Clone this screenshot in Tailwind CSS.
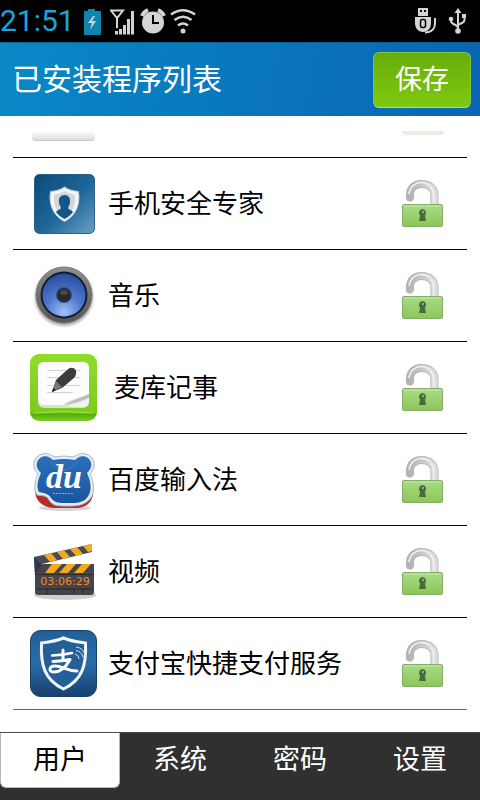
<!DOCTYPE html>
<html lang="zh-CN">

<head>
    <meta charset="UTF-8">
    <meta name="viewport" content="width=device-width, initial-scale=1.0">
    <title>已安装程序列表</title>
    <script src="https://cdn.jsdelivr.net/npm/@tailwindcss/browser@4"></script>
</head>

<body class="min-h-screen flex flex-col bg-white text-black font-['Roboto','Noto_Sans_CJK_SC',sans-serif]">
    <!-- Shared lock icon -->
    <svg width="0" height="0" class="absolute" aria-hidden="true">
        <defs>
            <linearGradient id="lockBody" x1="0" y1="0" x2="0" y2="1">
                <stop offset="0" stop-color="#a6dc86" />
                <stop offset="1" stop-color="#8cc657" />
            </linearGradient>
            <linearGradient id="lockBar" x1="0" y1="0" x2="1" y2="0">
                <stop offset="0" stop-color="#b4b4b4" />
                <stop offset="1" stop-color="#dedede" />
            </linearGradient>
        </defs>
        <symbol id="lock" viewBox="0 0 48 56">
            <path d="M11 21.500C10 12 16 8 22.500 8C31 8 35.500 13 35.500 20V30" fill="none" stroke="#b0b0b0" stroke-width="8" stroke-linecap="round" />
            <path d="M11 21.500C10 12 16 8 22.500 8C31 8 35.500 13 35.500 20V30" fill="none" stroke="url(#lockBar)" stroke-width="6.500" stroke-linecap="round" />
            <path d="M10 18C11 10 17 6 23 6.500C30 7 34 12 34.500 18V27" fill="none" stroke="#f2f2f2" stroke-width="1.500" />
            <rect x="3.500" y="28.500" width="40" height="22" rx="1.500" fill="url(#lockBody)" stroke="#86ad66" />
            <path d="M5 30H42" stroke="#c2ebab" />
            <path d="M23.500 33a3.800 3.800 0 0 1 2.300 6.600L27 45H20l1.200-5.400A3.800 3.800 0 0 1 23.500 33z" fill="#4b6a3c" />
            <circle cx="24" cy="36" r="1.200" fill="#93a986" />
        </symbol>
    </svg>

    <!-- Status bar -->
    <div class="h-[42px] bg-black flex items-center justify-between pr-3">
        <div class="flex items-center">
            <time class="w-[82px] text-[30px] leading-10 text-[#1ba4dc]">21:51</time>
            <svg class="w-5 h-7" viewBox="0 0 20 28">
                <path d="M6 2h7v2h6v24H2V4h4z" fill="#0f84ae" />
                <path d="M11 9l-5 7h4l-2 7 6-9h-4l3-5z" fill="#c9d4da" />
            </svg>
            <svg class="w-7 h-7 ml-2" viewBox="0 0 28 28" fill="none" stroke="#d4d4d4">
                <path d="M1 3.500H13L7.500 10.500H6.500zM7 9V21" stroke-width="2" />
                <path d="M6.500 24v3.500M10.500 22v5.500M14.500 18v9.500M18.500 12v15.500M22.500 4v23.500" stroke-width="3" />
            </svg>
            <svg class="w-7 h-7 ml-px" viewBox="0 0 28 28">
                <circle cx="14" cy="15.500" r="11" fill="#d4d4d4" />
                <path d="M3 9a11 11 0 0 1 6-6M19 3a11 11 0 0 1 6 6" fill="none" stroke="#d4d4d4" stroke-width="4" />
                <path d="M14 8v8h6" fill="none" stroke="#000" stroke-width="2" />
            </svg>
            <svg class="w-7 h-7 ml-0.5" viewBox="0 0 28 28" fill="none" stroke="#d4d4d4" stroke-width="2.500">
                <path d="M2 7.500Q14-1 26 7.500M5.500 13Q14 6.500 22.500 13M9 18.500Q14 14.500 19 18.500" />
                <circle cx="14" cy="24" r="2.500" fill="#d4d4d4" stroke="none" />
            </svg>
        </div>
        <div class="flex items-center gap-2">
            <svg class="w-7 h-7" viewBox="0 0 28 28">
                <path d="M6 1h10v8H6z" fill="#d4d4d4" />
                <path d="M8 3h2v2H8zM12 3h2v2h-2z" fill="#000" />
                <path d="M3 10h16v6c0 6-4 9-8 9s-8-3-8-9z" fill="#d4d4d4" />
                <rect x="8.500" y="12.500" width="5" height="8" rx="2" fill="none" stroke="#000" stroke-width="1.500" />
                <path d="M23 11v5c0 6-4 9.500-10 9.500" fill="none" stroke="#d4d4d4" stroke-width="2" />
            </svg>
            <svg class="w-5 h-7" viewBox="0 0 20 28" fill="none" stroke="#d4d4d4" stroke-width="2">
                <path d="M10 5v19M3 14c0 4 7 3 7 7M16.500 9v4c0 4-6.500 3-6.500 6" />
                <path d="M10 1l3.500 5h-7zM14 7h4v4h-4z" fill="#d4d4d4" stroke="none" />
                <circle cx="3" cy="12" r="2.300" fill="#d4d4d4" stroke="none" />
                <circle cx="10" cy="24" r="2.800" fill="#d4d4d4" stroke="none" />
            </svg>
        </div>
    </div>

    <!-- Title bar -->
    <header class="h-[74px] flex items-center justify-between pl-3 pr-[9px] border-t border-[#0a5f8c] bg-linear-100 from-[#0989c6] to-[#0b65b4]">
        <h1 class="text-[30px] leading-10 text-white">已安装程序列表</h1>
        <button class="w-[98px] h-[56px] rounded-md border border-[#7cc93c] border-b-[#a9dfa0] bg-linear-to-b from-[#68ad0c] to-[#7fc90f] text-[27px] leading-10 text-white">保存</button>
    </header>

    <!-- App list -->
    <main class="flex-1 px-[13px] pt-[15px]">
        <ul>
            <li class="h-[27px] flex items-start justify-between pl-[19px] pr-[23px] border-b border-black">
                <span class="w-[63px] h-[10px] rounded-b-sm border-b border-[#c6c6cc] bg-linear-to-b from-white to-[#dcdce2]"></span>
                <span class="w-[42px] h-1 rounded-b-sm bg-[#ecece4]"></span>
            </li>
            <li class="h-[92px] flex items-center gap-[10px] pl-[17px] pr-5 border-b border-black">
                <svg class="size-[68px]" viewBox="0 0 68 68">
                    <defs>
                        <linearGradient id="guard" x1="0" y1="0" x2="1" y2="1">
                            <stop offset="0" stop-color="#0d4a75" />
                            <stop offset=".55" stop-color="#1f679a" />
                            <stop offset="1" stop-color="#6d9fc4" />
                        </linearGradient>
                    </defs>
                    <rect x="4.500" y="4.500" width="60" height="59" rx="5" fill="url(#guard)" stroke="#2b5f86" />
                    <path d="M34.500 17c4 3 9 4 14 4.500 2 12-2 24-14 30-12-6-16-18-14-30 5-.5 10-1.500 14-4.500z" fill="#f4f7fa" stroke="#b7cbdc" />
                    <path d="M34.500 21c3 2 6 3 10 3.500 2 9-1 17-10 22.500-9-5.500-12-13.500-10-22.500 4-.5 7-1.500 10-3.500z" fill="#d3d6da" />
                    <path d="M34.500 25c4 0 6 3 5.500 7-.2 3-1.500 4-2 6 1 2 4 2 5 4-2 3-5 5-8.500 7-3.500-2-6.500-4-8.500-7 1-2 4-2 5-4-.5-2-1.800-3-2-6-.5-4 1.500-7 5.500-7z" fill="#15568a" />
                </svg>
                <span class="flex-1 text-[26px] leading-9">手机安全专家</span>
                <button aria-label="锁定手机安全专家"><svg class="w-12 h-14"><use href="#lock" /></svg></button>
            </li>
            <li class="h-[92px] flex items-center gap-[10px] pl-[17px] pr-5 border-b border-black">
                <svg class="size-[68px]" viewBox="0 0 68 68">
                    <defs>
                        <radialGradient id="cone" cx=".5" cy=".9" r=".85">
                            <stop offset="0" stop-color="#9fc0f8" />
                            <stop offset=".5" stop-color="#4f78cc" />
                            <stop offset="1" stop-color="#2c50a6" />
                        </radialGradient>
                        <radialGradient id="speakerShade">
                            <stop offset=".8" stop-color="#888" />
                            <stop offset="1" stop-color="#888" stop-opacity="0" />
                        </radialGradient>
                        <linearGradient id="ring" x1="0" y1="0" x2="0" y2="1">
                            <stop offset="0" stop-color="#8f8f8d" />
                            <stop offset="1" stop-color="#555553" />
                        </linearGradient>
                    </defs>
                    <circle cx="34" cy="35" r="31" fill="url(#speakerShade)" />
                    <circle cx="34" cy="33" r="28" fill="url(#ring)" stroke="#777" />
                    <circle cx="34" cy="33" r="23.500" fill="#141c30" />
                    <circle cx="34" cy="33" r="21.500" fill="url(#cone)" />
                    <circle cx="34" cy="33" r="8" fill="#2f4f94" />
                    <circle cx="34" cy="33" r="7" fill="#28282b" />
                    <ellipse cx="34" cy="30.500" rx="4" ry="2.500" fill="#484848" />
                </svg>
                <span class="flex-1 text-[26px] leading-9">音乐</span>
                <button aria-label="锁定音乐"><svg class="w-12 h-14"><use href="#lock" /></svg></button>
            </li>
            <li class="h-[92px] flex items-center gap-4 pl-[17px] pr-5 border-b border-black">
                <svg class="size-[68px]" viewBox="0 0 68 68">
                    <defs>
                        <linearGradient id="note" x1="0" y1="0" x2="0" y2="1">
                            <stop offset="0" stop-color="#8fdc2c" />
                            <stop offset=".86" stop-color="#7ccc1c" />
                            <stop offset=".9" stop-color="#57ad0c" />
                            <stop offset="1" stop-color="#7bd021" />
                        </linearGradient>
                    </defs>
                    <rect width="67" height="67" rx="9" fill="url(#note)" />
                    <path d="M3 59q31-3 61 0" fill="none" stroke="#a2e755" />
                    <rect x="8" y="8" width="51" height="46" rx="6" fill="#d6e2cb" />
                    <path d="M14 8H53q6 0 6 6V40C48 45 40 45 33 51H14q-6 0-6-6V14q0-6 6-6z" fill="#fcfcfc" />
                    <path d="M59 40C49 45 41 46 36 51 46 48 53 47 59 43z" fill="#b9bdb6" />
                    <path d="M36 52C45 49 53 48 59 44V48q0 5-6 5z" fill="#f0f2ee" />
                    <path d="M17 16.500H50M17 23.500H50M17 31.500H50M17 38.500H43" stroke="#d2d2d2" />
                    <path d="M22 38l4-12L37 16q4-4 8-1 3 4-1 9L32 34z" fill="#3c3c3e" />
                    <path d="M22 38l4-11 6 6z" fill="#77777a" />
                    <path d="M22 38l1-4 3 2z" fill="#222" />
                </svg>
                <span class="flex-1 text-[26px] leading-9">麦库记事</span>
                <button aria-label="锁定麦库记事"><svg class="w-12 h-14"><use href="#lock" /></svg></button>
            </li>
            <li class="h-[92px] flex items-center gap-[10px] pl-[17px] pr-5 border-b border-black">
                <svg class="size-[68px]" viewBox="0 0 68 68">
                    <defs>
                        <linearGradient id="bear" x1="0" y1="0" x2="0" y2="1">
                            <stop offset="0" stop-color="#2c6fba" />
                            <stop offset="1" stop-color="#1956a0" />
                        </linearGradient>
                    </defs>
                    <ellipse cx="35" cy="62" rx="26" ry="3" fill="#d5d5d5" />
                    <path d="M5 44C5 55 12 61 24 62H48C58 61 63 54 63 47z" fill="#b52a2c" />
                    <path d="M24 11Q34 9 44 11C48 7 55 6 60 10 66 15 65 23 60 28 65 38 65 48 59 54 52 61 42 60 34 60 26 60 22 59 19 54 17 49 12 50 7 49 3 43 5 35 8 28 3 23 2 15 8 10 13 6 20 7 24 11z" fill="#e3ebf4" stroke="#a9b8cb" />
                    <path d="M23 14Q34 12 45 14C49 10 54 9 58 12 63 16 62 23 57 27 62 38 62 47 56 53 50 58 42 57 34 57 27 57 24 56 21 52 18 47 13 47 9 46 6 40 8 34 11 27 6 23 5 16 10 12 14 9 19 10 23 14z" fill="url(#bear)" />
                    <path d="M20 15q14 18 28 0" fill="none" stroke="#4480c6" />
                    <text x="34" y="42" text-anchor="middle" font-family="Liberation Serif, serif" font-size="34" font-weight="bold" font-style="italic" fill="#fff">du</text>
                    <path d="M23 47.500H43" stroke="#89b0dc" stroke-dasharray="2 1" />
                </svg>
                <span class="flex-1 text-[26px] leading-9">百度输入法</span>
                <button aria-label="锁定百度输入法"><svg class="w-12 h-14"><use href="#lock" /></svg></button>
            </li>
            <li class="h-[92px] flex items-center gap-[10px] pl-[17px] pr-5 border-b border-black">
                <svg class="size-[68px]" viewBox="0 0 68 68">
                    <ellipse cx="35" cy="57" rx="31" ry="5" fill="#cfcfcf" />
                    <path d="M4 19L62 6v8L12 26l4 8-11 3z" fill="#4a4a52" />
                    <path d="M14 17l7-2 6 7-7 2zM27 14l7-2 6 7-7 2zM40 11l7-2 6 7-7 2zM53 8l7-2 2 0v7l-4 1z" fill="#f5a91e" />
                    <path d="M4 19l8 8-7 10z" fill="#2e3552" />
                    <path d="M5 36L13 26H64V54q0 3-3 3H8q-3 0-3-3z" fill="#44444b" />
                    <path d="M22 26h10l-8 9h-9zM37 26h9l-8 9h-9zM52 26h9l-8 9h-9z" fill="#f5a91e" />
                    <path d="M5 36.500H64" stroke="#2c2c33" />
                    <text x="35" y="47" text-anchor="middle" font-family="DejaVu Sans, sans-serif" font-size="11" fill="#f58a22">03:06:29</text>
                    <path d="M7 51H63M17 51v5M44 51v5M53 51v5" stroke="#26262c" />
                </svg>
                <span class="flex-1 text-[26px] leading-9">视频</span>
                <button aria-label="锁定视频"><svg class="w-12 h-14"><use href="#lock" /></svg></button>
            </li>
            <li class="h-[92px] flex items-center gap-[10px] pl-[17px] pr-5 border-b border-[#666]">
                <svg class="size-[68px]" viewBox="0 0 68 68">
                    <defs>
                        <linearGradient id="pay" x1="0" y1="0" x2="0" y2="1">
                            <stop offset="0" stop-color="#225f98" />
                            <stop offset=".5" stop-color="#2a6ca8" />
                            <stop offset="1" stop-color="#16406d" />
                        </linearGradient>
                    </defs>
                    <rect x=".5" y=".5" width="66" height="66" rx="10" fill="url(#pay)" stroke="#183f66" />
                    <path d="M33.500 8c7 3 14 4 22 5 1 22-3 37-22 46-19-9-23-24-22-46 8-1 15-2 22-5z" fill="#255f98" stroke="#f1f6fb" stroke-width="3" />
                    <!-- Brand mark -->
                    <g fill="none" stroke="#fff" stroke-linecap="round" stroke-linejoin="round">
                        <path d="M22 25.500Q33 25 42 23" stroke-width="2.500" />
                        <path d="M33 20V29" stroke-width="3" />
                        <path d="M23 31.500Q32 31 40 29.500C36 37 30 42 24 42 18 42 19 36 25 36 33 36 37 41 47 41" stroke-width="3" />
                    </g>
                    <path d="M45 24q4 1 4 5M46 20.500q6 1 7 7M46 17q8 1 9 9" fill="none" stroke="#cfe0f0" />
                </svg>
                <span class="flex-1 text-[26px] leading-9">支付宝快捷支付服务</span>
                <button aria-label="锁定支付宝快捷支付服务"><svg class="w-12 h-14"><use href="#lock" /></svg></button>
            </li>
        </ul>
    </main>

    <!-- Bottom tabs -->
    <nav class="h-[68px] grid grid-cols-4 items-start border-t border-[#4a4a4a] bg-[#303030] text-[27px] leading-[54px] text-center text-white">
        <a href="#user" class="rounded-b-md border-x border-b border-[#b5b5ba] bg-white text-black" aria-current="page">用户</a>
        <a href="#system">系统</a>
        <a href="#password">密码</a>
        <a href="#settings">设置</a>
    </nav>
</body>

</html>
